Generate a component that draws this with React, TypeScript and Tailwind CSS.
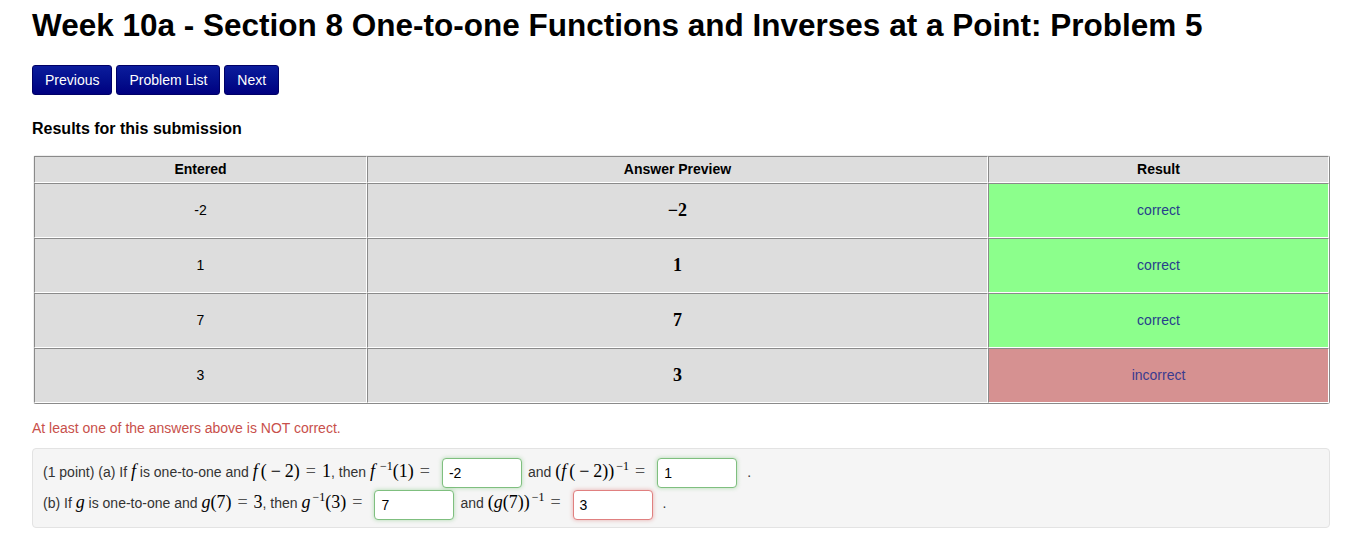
import React from 'react';

type Row = { entered: string; preview: string; ok: boolean };

const rows: Row[] = [
  { entered: '-2', preview: '\u22122', ok: true },
  { entered: '1', preview: '1', ok: true },
  { entered: '7', preview: '7', ok: true },
  { entered: '3', preview: '3', ok: false },
];

const cell =
  'border border-t-[#8a8a8a] border-l-[#8a8a8a] border-b-white border-r-white text-center align-middle';

function M({ children }: { children: React.ReactNode }) {
  return (
    <span className="font-['Liberation_Serif',serif] text-[18px] leading-none text-black">
      {children}
    </span>
  );
}

function I({ children, wide }: { children: React.ReactNode; wide?: boolean }) {
  return <span className={'italic' + (wide ? ' pr-[3px]' : '')}>{children}</span>;
}

// equals sign with TeX-like thick spacing
function Eq() {
  return <span className="mx-[6px] text-[#555]">=</span>;
}

function Minus() {
  return <span className="mx-[4px]">−</span>;
}

function Inv() {
  return <sup className="text-[12px] ml-[2px] -top-[0.6em]">−1</sup>;
}

function AnswerBox({ value, ok }: { value: string; ok: boolean }) {
  return (
    <span
      className={
        'inline-flex items-center align-middle w-[80px] h-[30px] mx-[6px] px-[6px] rounded-[4px] bg-white border text-[14px] text-black ' +
        (ok
          ? 'border-[#7fbf7f] shadow-[0_0_4px_rgba(92,184,92,0.45)]'
          : 'border-[#e08080] shadow-[0_0_4px_rgba(217,83,79,0.45)]')
      }
    >
      {value}
    </span>
  );
}

function NavButton({ label }: { label: string }) {
  return (
    <button className="h-[30px] px-[12px] rounded-[3px] border border-[#000066] bg-gradient-to-b from-[#0c1c9c] to-[#000080] text-white text-[14px]">
      {label}
    </button>
  );
}

export default function App() {
  return (
    <div className="bg-white min-h-[550px] px-8 font-['Liberation_Sans',Arial,sans-serif] text-[#333]">
      <h1 className="pt-[5px] h-[45px] leading-[40px] text-[31.5px] font-bold text-black">
        Week 10a - Section 8 One-to-one Functions and Inverses at a Point: Problem 5
      </h1>
      <div className="mt-[20px] flex gap-[4px]">
        <NavButton label="Previous" />
        <NavButton label="Problem List" />
        <NavButton label="Next" />
      </div>
      <h3 className="mt-[25px] text-[16px] leading-[18px] font-bold text-black">
        Results for this submission
      </h3>
      <table className="mt-[17px] w-[1297px] ml-px border-separate border-spacing-0 border border-t-[#eee] border-l-[#eee] border-b-[#8a8a8a] border-r-[#8a8a8a] rounded-[3px] text-[14px] text-black">
        <thead>
          <tr className="h-[27px]">
            <th className={cell + ' w-[333px] bg-[#dddddd] font-bold'}>Entered</th>
            <th className={cell + ' w-[621px] bg-[#dddddd] font-bold'}>Answer Preview</th>
            <th className={cell + ' bg-[#dddddd] font-bold'}>Result</th>
          </tr>
        </thead>
        <tbody>
          {rows.map((r) => (
            <tr key={r.entered} className="h-[55px]">
              <td className={cell + ' bg-[#dddddd]'}>{r.entered}</td>
              <td className={cell + ' bg-[#dddddd]'}>
                <span className="font-['Liberation_Serif',serif] text-[18px] font-semibold">
                  {r.preview}
                </span>
              </td>
              <td
                className={
                  cell +
                  (r.ok ? ' bg-[#8cff8c] text-[#27408b]' : ' bg-[#d69191] text-[#3b3b8f]')
                }
              >
                {r.ok ? 'correct' : 'incorrect'}
              </td>
            </tr>
          ))}
        </tbody>
      </table>
      <div className="mt-[14px] text-[14px] leading-[20px] text-[#c8504b]">
        At least one of the answers above is NOT correct.
      </div>
      <div className="mt-[10px] w-[1298px] rounded-[4px] border border-[#e3e3e3] bg-[#f5f5f5] px-[10px] pt-[8px] pb-[7px] text-[14px] text-[#333] leading-[30px]">
        <div>
          (1 point) (a) If <M><I>f</I></M> is one-to-one and{' '}
          <M>
            <I wide>f</I>(<Minus />2)<Eq />1
          </M>
          , then{' '}
          <M>
            <I wide>f</I>
            <Inv />(1)<Eq />
          </M>
          <AnswerBox value="-2" ok />
          and{' '}
          <M>
            (<I wide>f</I>(<Minus />2))
            <Inv />
            <Eq />
          </M>
          <AnswerBox value="1" ok />
          <span className="ml-[4px]">.</span>
        </div>
        <div>
          (b) If <M><I>g</I></M> is one-to-one and{' '}
          <M>
            <I>g</I>(7)<Eq />3
          </M>
          , then{' '}
          <M>
            <I>g</I>
            <Inv />(3)<Eq />
          </M>
          <AnswerBox value="7" ok />
          and{' '}
          <M>
            (<I>g</I>(7))
            <Inv />
            <Eq />
          </M>
          <AnswerBox value="3" ok={false} />
          <span className="ml-[4px]">.</span>
        </div>
      </div>
    </div>
  );
}
